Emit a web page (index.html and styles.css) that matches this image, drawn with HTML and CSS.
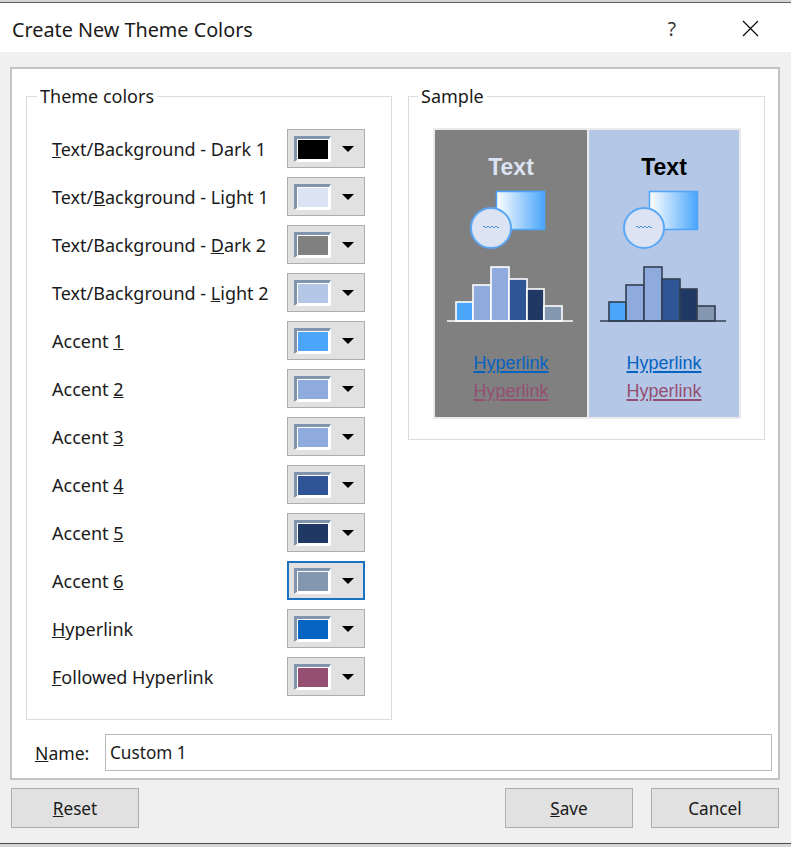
FILE: index.html
```html
<!DOCTYPE html>
<html>
<head>
<meta charset="utf-8">
<title>Create New Theme Colors</title>
<link rel="stylesheet" href="styles.css">
</head>
<body>
<div class="window">
  <div class="topstrip"></div>
  <div class="titlebar">
    <div class="title">Create New Theme Colors</div>
    <div class="help">?</div>
    <svg class="close" width="17" height="17" viewBox="0 0 17 17"><path d="M1 1 L16 16 M16 1 L1 16" stroke="#000" stroke-width="1.1" fill="none"/></svg>
  </div>
  <div class="body">
    <div class="panel">
      <div class="groups">
        <fieldset class="group theme">
          <legend>Theme colors</legend>
          <div class="rows">
            <div class="row"><span class="lbl"><u>T</u>ext/Background - Dark 1</span><span class="cbtn"><span class="sw"><span class="fill" style="background:#000000"></span></span><span class="arrow"></span></span></div>
            <div class="row"><span class="lbl">Text/<u>B</u>ackground - Light 1</span><span class="cbtn"><span class="sw"><span class="fill" style="background:#dce3f3"></span></span><span class="arrow"></span></span></div>
            <div class="row"><span class="lbl">Text/Background - <u>D</u>ark 2</span><span class="cbtn"><span class="sw"><span class="fill" style="background:#808080"></span></span><span class="arrow"></span></span></div>
            <div class="row"><span class="lbl">Text/Background - <u>L</u>ight 2</span><span class="cbtn"><span class="sw"><span class="fill" style="background:#b4c7e7"></span></span><span class="arrow"></span></span></div>
            <div class="row"><span class="lbl">Accent <u>1</u></span><span class="cbtn"><span class="sw"><span class="fill" style="background:#4aa5fb"></span></span><span class="arrow"></span></span></div>
            <div class="row"><span class="lbl">Accent <u>2</u></span><span class="cbtn"><span class="sw"><span class="fill" style="background:#8faadc"></span></span><span class="arrow"></span></span></div>
            <div class="row"><span class="lbl">Accent <u>3</u></span><span class="cbtn"><span class="sw"><span class="fill" style="background:#8faadc"></span></span><span class="arrow"></span></span></div>
            <div class="row"><span class="lbl">Accent <u>4</u></span><span class="cbtn"><span class="sw"><span class="fill" style="background:#2f5597"></span></span><span class="arrow"></span></span></div>
            <div class="row"><span class="lbl">Accent <u>5</u></span><span class="cbtn"><span class="sw"><span class="fill" style="background:#203864"></span></span><span class="arrow"></span></span></div>
            <div class="row"><span class="lbl">Accent <u>6</u></span><span class="cbtn focused"><span class="sw"><span class="fill" style="background:#8497b0"></span></span><span class="arrow"></span></span></div>
            <div class="row"><span class="lbl"><u>H</u>yperlink</span><span class="cbtn"><span class="sw"><span class="fill" style="background:#0563c1"></span></span><span class="arrow"></span></span></div>
            <div class="row"><span class="lbl"><u>F</u>ollowed Hyperlink</span><span class="cbtn"><span class="sw"><span class="fill" style="background:#954f72"></span></span><span class="arrow"></span></span></div>
          </div>
        </fieldset>
        <fieldset class="group samplegroup">
          <legend>Sample</legend>
          <div class="sample">
            <div class="spanel dark">
              <div class="stext">Text</div>
              <svg class="shapes" width="152" height="64" viewBox="0 0 152 64">
                <defs><linearGradient id="gL" x1="0" y1="0" x2="1" y2="0"><stop offset="0" stop-color="#ffffff"/><stop offset="1" stop-color="#4aa5fb"/></linearGradient></defs>
                <rect x="61.5" y="3.5" width="48" height="38" fill="url(#gL)" stroke="#4aa5fb" stroke-width="1.5"/>
                <circle cx="56" cy="40" r="20" fill="#dce3f3" stroke="#5aa7f5" stroke-width="2"/>
                <path d="M48 39 q1 -2 2 0 t2 0 t2 0 t2 0 t2 0 t2 0 t2 0 t2 0" fill="none" stroke="#4a8fd9" stroke-width="1"/>
              </svg>
              <svg class="chart" width="152" height="60" viewBox="0 0 152 60">
                <g stroke="#ffffff" stroke-width="1.6">
                  <rect x="21" y="38" width="17" height="19" fill="#4aa5fb"/>
                  <rect x="38" y="21" width="18" height="36" fill="#8faadc"/>
                  <rect x="56" y="3" width="18" height="54" fill="#8faadc"/>
                  <rect x="74" y="15" width="18" height="42" fill="#2f5597"/>
                  <rect x="92" y="25" width="17" height="32" fill="#203864"/>
                  <rect x="109" y="42" width="18" height="15" fill="#8497b0"/>
                  <line x1="12" y1="57" x2="138" y2="57"/>
                </g>
              </svg>
              <div class="hl">Hyperlink</div>
              <div class="fhl">Hyperlink</div>
            </div>
            <div class="spanel light">
              <div class="stext">Text</div>
              <svg class="shapes" width="152" height="64" viewBox="0 0 152 64">
                <defs><linearGradient id="gR" x1="0" y1="0" x2="1" y2="0"><stop offset="0" stop-color="#ffffff"/><stop offset="1" stop-color="#4aa5fb"/></linearGradient></defs>
                <rect x="61.5" y="3.5" width="48" height="38" fill="url(#gR)" stroke="#4aa5fb" stroke-width="1.5"/>
                <circle cx="56" cy="40" r="20" fill="#dce3f3" stroke="#5aa7f5" stroke-width="2"/>
                <path d="M48 39 q1 -2 2 0 t2 0 t2 0 t2 0 t2 0 t2 0 t2 0 t2 0" fill="none" stroke="#4a8fd9" stroke-width="1"/>
              </svg>
              <svg class="chart" width="152" height="60" viewBox="0 0 152 60">
                <g stroke="#323f52" stroke-width="1.6">
                  <rect x="21" y="38" width="17" height="19" fill="#4aa5fb"/>
                  <rect x="38" y="21" width="18" height="36" fill="#8faadc"/>
                  <rect x="56" y="3" width="18" height="54" fill="#8faadc"/>
                  <rect x="74" y="15" width="18" height="42" fill="#2f5597"/>
                  <rect x="92" y="25" width="17" height="32" fill="#203864"/>
                  <rect x="109" y="42" width="18" height="15" fill="#8497b0"/>
                  <line x1="12" y1="57" x2="138" y2="57"/>
                </g>
              </svg>
              <div class="hl">Hyperlink</div>
              <div class="fhl">Hyperlink</div>
            </div>
          </div>
        </fieldset>
      </div>
      <div class="namerow">
        <span class="namelbl"><u>N</u>ame:</span>
        <div class="input">Custom 1</div>
      </div>
    </div>
    <div class="buttons">
      <div class="btn reset"><u>R</u>eset</div>
      <div class="btn save"><u>S</u>ave</div>
      <div class="btn">Cancel</div>
    </div>
  </div>
  <div class="bottomstrip"></div>
</div>
</body>
</html>
```

FILE: styles.css
```css
* { box-sizing: border-box; }
html, body { margin: 0; padding: 0; }
body {
  width: 791px;
  height: 847px;
  overflow: hidden;
  background: #f0f0f0;
  font-family: "Noto Sans", "Open Sans", sans-serif;
  color: #000;
}
.window { display: flex; flex-direction: column; height: 847px; }
.topstrip { height: 3px; background: #d4d4d4; border-bottom: 1px solid #5f5f5f; }
.titlebar {
  height: 49px;
  background: #fff;
  display: flex;
  align-items: flex-start;
  padding-top: 13px;
}
.title { flex: 1; font-size: 19.8px; line-height: 27px; padding-left: 12px; color: #1a1a1a; }
.help { font-size: 19px; line-height: 27px; color: #333; margin-right: 66px; }
.close { margin-top: 4px; margin-right: 32px; }

.body { padding-top: 15px; }
.panel {
  margin: 0 11px 0 10px;
  background: #fff;
  border: 2px solid #c3c3c3;
  padding: 17px 0 7px 0;
}
.groups { display: flex; align-items: flex-start; padding-left: 14px; }
.group {
  margin: 0;
  padding: 0;
  border: 1px solid #dcdcdc;
  min-width: 0;
}
.group legend {
  font-size: 18px;
  line-height: 20px;
  padding: 0 3px;
  margin-left: 10px;
  color: #1a1a1a;
}
.theme { width: 366px; padding: 23px 0 23px 0; }
.samplegroup { width: 357px; margin-left: 16px; padding: 22px 0 20px 24px; }
.samplegroup legend { margin-left: -15px; }

.rows { display: flex; flex-direction: column; gap: 9px; }
.row {
  height: 39px;
  display: flex;
  align-items: center;
  justify-content: space-between;
  padding: 0 26px 0 25px;
}
.lbl { font-size: 18px; color: #1a1a1a; white-space: nowrap; }
.cbtn {
  width: 78px;
  height: 39px;
  border: 1px solid #adadad;
  background: #e1e1e1;
  display: flex;
  align-items: center;
  padding-left: 6px;
  flex: none;
}
.cbtn.focused { border: 2px solid #1a72c0; padding-left: 5px; }
.sw {
  width: 37px;
  height: 26px;
  border-style: solid;
  border-width: 3px 2px 2px 3px;
  border-color: #8194ad #ffffff #ffffff #8194ad;
  background: #fff;
  padding: 1px;
  display: flex;
}
.fill { flex: 1; }
.arrow {
  margin-left: 11px;
  width: 0;
  height: 0;
  border-left: 6px solid transparent;
  border-right: 6px solid transparent;
  border-top: 6px solid #000;
}

.sample {
  width: 308px;
  display: flex;
  gap: 2px;
  padding: 2px;
  background: #ebebeb;
}
.spanel {
  height: 287px;
  display: flex;
  flex-direction: column;
  align-items: center;
  font-family: "Liberation Sans", Arial, sans-serif;
}
.spanel.dark { width: 152px; background: #808080; }
.spanel.light { width: 150px; background: #b4c7e7; }
.stext { font-weight: bold; font-size: 23px; line-height: 26px; margin-top: 24px; }
.dark .stext { color: #dce3f3; }
.light .stext { color: #000; }
.shapes { margin-top: 8px; flex: none; }
.chart { margin-top: 12px; flex: none; }
.hl, .fhl {
  font-size: 18px;
  line-height: 29px;
  text-decoration: underline;
  text-decoration-thickness: 2px;
  text-underline-offset: 2px;
}
.hl { margin-top: 25px; color: #0563c1; }
.fhl { color: #954f72; margin-top: -1px; }

.namerow { display: flex; align-items: center; margin-top: 14px; padding-left: 23px; }
.namelbl { width: 70px; font-size: 17.6px; color: #1a1a1a; }
.input {
  width: 667px;
  height: 37px;
  border: 1px solid #b9b9b9;
  padding-left: 4px;
  font-size: 17.2px;
  line-height: 35px;
  color: #1a1a1a;
}

.buttons { display: flex; margin-top: 8px; padding: 0 12px 0 11px; }
.btn {
  width: 128px;
  height: 40px;
  border: 1px solid #adadad;
  background: #e1e1e1;
  font-size: 17.2px;
  line-height: 36px;
  padding-top: 2px;
  text-align: center;
  color: #1a1a1a;
}
.reset { margin-right: auto; }
.save { margin-right: 18px; }
.bottomstrip { margin-top: auto; height: 4px; background: #d6d6d6; border-top: 1px solid #4a4a4a; }
```
